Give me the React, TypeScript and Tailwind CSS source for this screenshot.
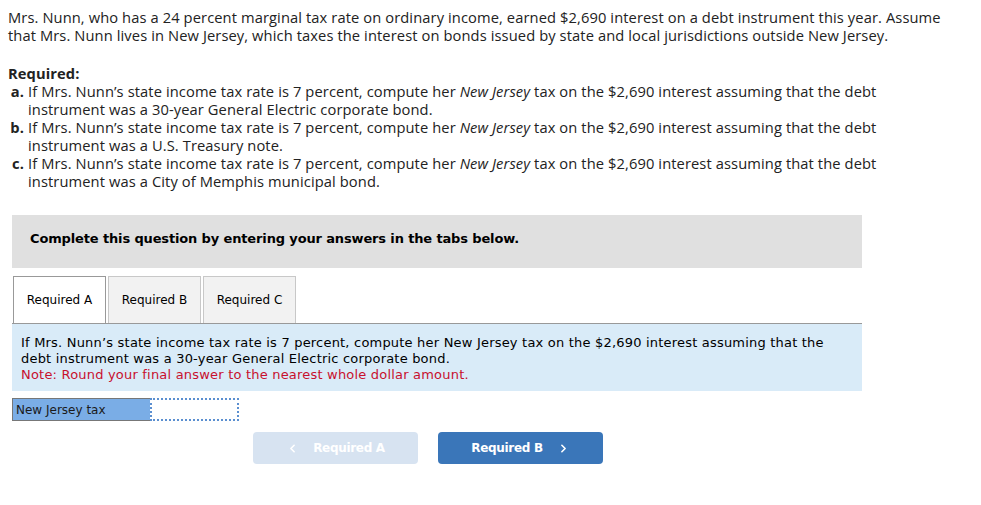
import { ChevronLeft, ChevronRight } from "lucide-react";

const parts = [
  { key: "a.", bond: "instrument was a 30-year General Electric corporate bond." },
  { key: "b.", bond: "instrument was a U.S. Treasury note." },
  { key: "c.", bond: "instrument was a City of Memphis municipal bond." },
];

const tabs = ["Required A", "Required B", "Required C"];

export default function App() {
  return (
    <div className="min-h-[505px] bg-white text-[#222]">
      <div className="px-2 pt-[8px] font-[family-name:Open_Sans,sans-serif] text-[14.7px] leading-[18px] tracking-[0.1px]">
        <p>
          Mrs. Nunn, who has a 24 percent marginal tax rate on ordinary income, earned $2,690 interest on a debt instrument this year. Assume
          <br />
          that Mrs. Nunn lives in New Jersey, which taxes the interest on bonds issued by state and local jurisdictions outside New Jersey.
        </p>
        <p className="mt-[20px] font-bold">Required:</p>
        <div>
          {parts.map((p) => (
            <div key={p.key} className="flex">
              <span className="w-5 shrink-0 text-right pr-1 font-bold">{p.key}</span>
              <div>
                If Mrs. Nunn&rsquo;s state income tax rate is 7 percent, compute her <i>New Jersey</i> tax on the $2,690 interest assuming that the debt
                <br />
                {p.bond}
              </div>
            </div>
          ))}
        </div>
      </div>

      <div className="ml-3 mt-[25px] w-[850px] font-[family-name:DejaVu_Sans,Verdana,sans-serif]">
        <div className="h-[53px] bg-[#e0e0e0] pl-[18px] pt-[14px] text-[13px] font-bold tracking-[-0.14px] text-black">
          Complete this question by entering your answers in the tabs below.
        </div>

        <div className="mt-2 flex gap-[2px] border-b border-[#999] pl-px">
          {tabs.map((t, i) => (
            <div
              key={t}
              className={
                i === 0
                  ? "-mb-px flex h-[47px] w-[93px] items-center justify-center border border-b-0 border-[#999] bg-white text-[12px] text-black"
                  : "flex h-[47px] w-[93px] items-center justify-center border border-b-0 border-[#c8c8c8] bg-[#f2f2f2] text-[12px] text-black"
              }
            >
              {t}
            </div>
          ))}
        </div>

        <div className="bg-[#d9ebf8] px-[9px] pb-[8px] pt-[11px] text-[13px] leading-[16px] tracking-[0.2px] text-black">
          <p>
            If Mrs. Nunn&rsquo;s state income tax rate is 7 percent, compute her New Jersey tax on the $2,690 interest assuming that the
            <br />
            debt instrument was a 30-year General Electric corporate bond.
          </p>
          <p className="text-[#c8102e]">Note: Round your final answer to the nearest whole dollar amount.</p>
        </div>

        <div className="mt-[7px] flex h-[23px]">
          <div className="flex w-[138px] items-center border border-r-0 border-[#777] bg-[#7aade6] pl-[3px] text-[12px] text-[#1a1a1a]">
            New Jersey tax
          </div>
          <div className="w-[89px] border-2 border-dotted border-[#5b8fd0] bg-white" />
        </div>

        <div className="mt-[11px] flex gap-5 pl-[241px]">
          <button className="flex h-[32px] w-[165px] items-center justify-center gap-[14px] rounded-sm bg-[#d7e3f1] text-[12px] font-bold tracking-[-0.3px] text-white">
            <ChevronLeft size={13} strokeWidth={3} />
            Required A
          </button>
          <button className="flex h-[32px] w-[165px] items-center justify-center gap-[14px] rounded-sm bg-[#3a76b9] text-[12px] font-bold tracking-[-0.3px] text-white">
            Required B
            <ChevronRight size={13} strokeWidth={3} />
          </button>
        </div>
      </div>
    </div>
  );
}
